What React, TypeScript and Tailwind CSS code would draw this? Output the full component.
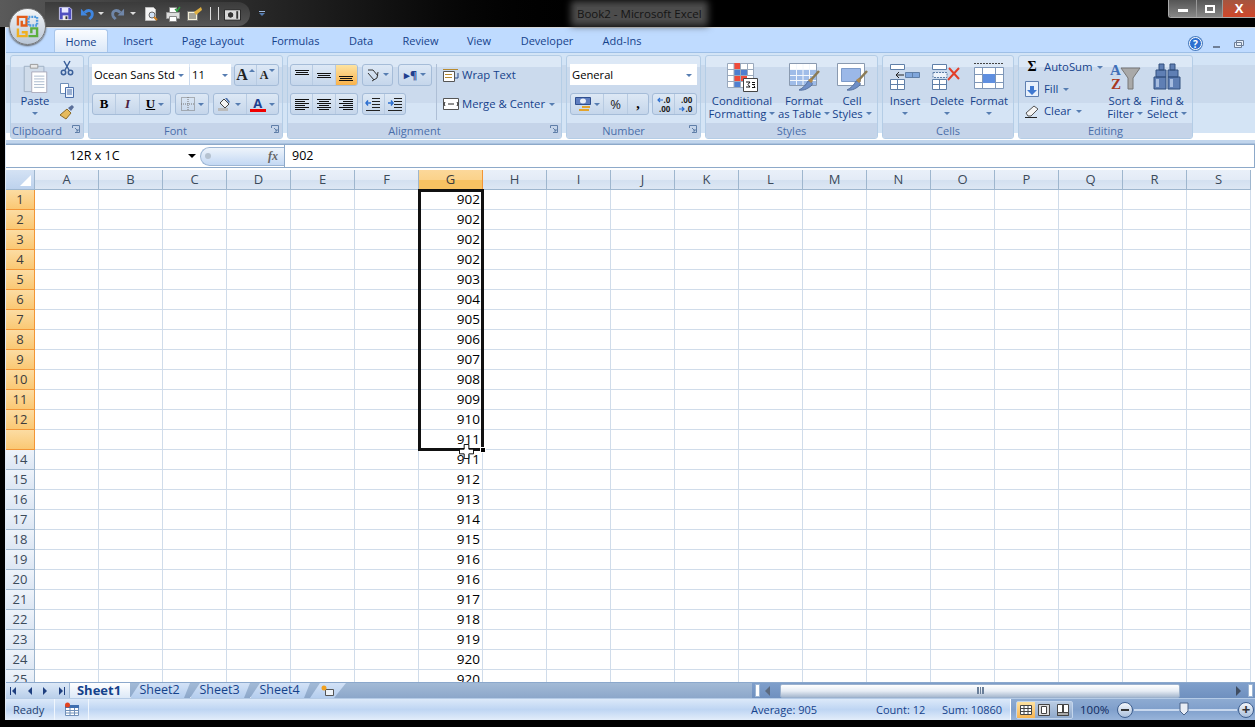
import type { ReactNode } from "react";

const font = "font-['Open_Sans',sans-serif]";
const columns = ["A", "B", "C", "D", "E", "F", "G", "H", "I", "J", "K", "L", "M", "N", "O", "P", "Q", "R", "S"];
const values = [902, 902, 902, 902, 903, 904, 905, 906, 907, 908, 909, 910, 911, 911, 912, 913, 914, 915, 916, 916, 917, 918, 919, 920, 920];
const tabs = [
  ["Home", "w-[54px]"],
  ["Insert", "w-[60px]"],
  ["Page Layout", "w-[90px]"],
  ["Formulas", "w-[75px]"],
  ["Data", "w-[56px]"],
  ["Review", "w-[63px]"],
  ["View", "w-[54px]"],
  ["Developer", "w-[82px]"],
  ["Add-Ins", "w-[68px]"],
];

function Caret({ className = "" }: { className?: string }) {
  return <span className={`inline-block h-0 w-0 shrink-0 border-x-[3px] border-t-[3px] border-x-transparent border-t-[#567db1] ${className}`} />;
}

function Group({ label, width, launcher, children }: { label: string; width: string; launcher?: boolean; children: ReactNode }) {
  return (
    <section className={`${width} flex h-[84px] shrink-0 flex-col overflow-hidden rounded-[3px] border border-[#b4cde6] bg-[linear-gradient(#dce8f6_0,#dce8f6_11px,#cbdaed_11px,#cbdaed_47px,#d5e4f5_47px,#d5e4f5_100%)]`}>
      <div className="min-h-0 flex-1">{children}</div>
      <div className={`relative flex h-[15px] items-center justify-center bg-[#c5d4e9] text-[11px] leading-none text-[#4a6ea9] ${launcher ? "pr-[20px]" : ""}`}>
        {label}
        {launcher && (
          <svg viewBox="0 0 8 8" className="absolute right-[3px] top-[2px] h-2 w-2" fill="none" stroke="#5f7ea8">
            <path d="M.5 3V.5h7v7H3M3 3l3 3M6 4v2H4" />
          </svg>
        )}
      </div>
    </section>
  );
}

function BtnGroup({ width, children }: { width: string; children: ReactNode }) {
  return <div className={`${width} flex h-[22px] items-center overflow-hidden rounded-[3px] border border-[#a5bcd8] bg-gradient-to-b from-[#dde8f5] to-[#c5d6eb]`}>{children}</div>;
}

function Cell({ children, className = "flex-1" }: { children: ReactNode; className?: string }) {
  return <div className={`${className} flex h-full items-center justify-center gap-[3px] border-r border-[#b8cbe2] last:border-r-0`}>{children}</div>;
}

function Lines({ kind }: { kind: "left" | "center" | "right" | "top" | "middle" | "bottom" }) {
  const rows = kind === "top" || kind === "middle" || kind === "bottom";
  const y = kind === "top" ? [3, 5, 7] : kind === "middle" ? [6, 8, 10] : kind === "bottom" ? [9, 11, 13] : [3, 5, 7, 9, 11, 13];
  return (
    <svg viewBox="0 0 16 16" className="h-4 w-4" stroke="#111" fill="none">
      {y.map((v, i) => {
        const narrow = !rows && i % 2 === 1;
        const x1 = kind === "right" && narrow ? 5 : kind === "center" && narrow ? 3 : rows && i === 1 ? 2 : 1;
        const x2 = kind === "left" && narrow ? 11 : kind === "center" && narrow ? 13 : rows && i === 1 ? 14 : 15;
        return <path key={v} d={`M${x1} ${v + 0.5}H${x2}`} />;
      })}
    </svg>
  );
}

function Big({ label, second, width, caretOnly, children }: { label: string; second?: string; width: string; caretOnly?: boolean; children: ReactNode }) {
  return (
    <div className={`${width} flex shrink-0 flex-col items-center text-[11.3px] leading-[13px] text-[#15428b]`}>
      <div className="flex h-[35px] items-center justify-center">{children}</div>
      <div className="whitespace-nowrap">{label}</div>
      {caretOnly ? (
        <Caret className="mt-[5px]" />
      ) : (
        <div className="flex items-center gap-[3px] whitespace-nowrap">
          {second}
          <Caret />
        </div>
      )}
    </div>
  );
}

function Brush() {
  return (
    <>
      <path stroke="#8a7a55" strokeWidth="2.5" d="M31 9 21 20" />
      <path fill="#6f8ec6" stroke="#56719f" d="M20 19c3 0 5 2 4 4-3 3-8 6-13 5 4-2 7-5 9-9z" />
      <path fill="#b08a50" d="m20 18 3-2 2 3-2 2z" />
    </>
  );
}

function CondIcon() {
  return (
    <svg viewBox="0 0 32 30" className="h-[30px] w-[32px]">
      <path fill="#fff" stroke="#9aa9bd" d="M1.5 1.5h26v24h-26z" />
      <path fill="#ef4b3a" d="M8 1h6v6H8zM8 13h13v6H8z" />
      <path fill="#4f7fd0" d="M8 7h14v6H8zM8 19h6v6H8z" />
      <path stroke="#9aa9bd" fill="none" d="M1.5 7.5h26M1.5 13.5h26M1.5 19.5h26M8 1.5v24M14.5 1.5v24M21.5 1.5v12" />
      <path fill="#fff" stroke="#444" d="M17.5 16.5h14v13h-14z" />
      <path stroke="#111" fill="none" d="M20 20h4l-2 2.5 2 2.5h-4M26 20.5h3M26 22.5h3M26 25.5h3l-1-2" />
    </svg>
  );
}

function BrushTable({ cell }: { cell?: boolean }) {
  return (
    <svg viewBox="0 0 32 30" className="h-[30px] w-[32px]">
      <path fill="#fff" stroke="#8a9ab0" d="M1.5 1.5h27v22h-27z" />
      {cell ? <path fill="#9bb8e8" stroke="#7d9ac8" d="M5.5 6.5h19v13h-19z" /> : <path fill="#9fbce8" d="M2 7h26v16H2z" />}
      {!cell && <path stroke="#f3f7fc" fill="none" d="M2 7.5h26M2 13.5h26M2 18.5h26M8.5 2v21M15 2v21M21.5 2v21" />}
      <Brush />
    </svg>
  );
}

function CellIcon({ kind }: { kind: "insert" | "delete" }) {
  return (
    <svg viewBox="0 0 32 30" className="h-[30px] w-[32px]">
      <g fill="#fff" stroke="#5f7fa8">
        <path d="M1.5 2.5h14v5h-14zM1.5 17.5h14v10h-14zM8.5 17.5v10M1.5 22.5h14" />
      </g>
      {kind === "insert" ? (
        <>
          <path fill="#7fa6dc" stroke="#5f7fa8" d="M16.5 10.5h14v5h-14zM23.5 10.5v5" />
          <path stroke="#222" fill="none" d="M15 13H7M10 10l-3 3 3 3" />
        </>
      ) : (
        <>
          <path fill="#eef3fa" stroke="#5f7fa8" strokeDasharray="2 1" d="M2 10.5h14v5H2z" />
          <path stroke="#e2402a" strokeWidth="2" fill="none" d="M18 6l10 11M28 6 17 18" />
        </>
      )}
    </svg>
  );
}

function SmallTableIcon() {
  return (
    <svg viewBox="0 0 16 16" className="h-4 w-4" fill="none">
      <path fill="#fff" stroke="#6f8fb8" d="M1.5 3.5h13v10h-13z" />
      <path fill="#3f6fb0" d="M1 3h14v3H1z" />
      <path stroke="#6f8fb8" d="M1.5 8.5h13M1.5 11h13M6 6v8M10.5 6v8" />
      <circle cx="3.5" cy="3" r="2.5" fill="#e4431f" />
    </svg>
  );
}

function NavArrow({ dir, bar }: { dir: "left" | "right"; bar?: boolean }) {
  return (
    <svg viewBox="0 0 8 8" className="h-2 w-2" fill="#1f3f7f">
      {dir === "left" ? <path d="M6 0v8L2 4z" /> : <path d="M2 0v8l4-4z" />}
      {bar && <path d={dir === "left" ? "M0 0h1v8H0z" : "M7 0h1v8H7z"} />}
    </svg>
  );
}

export default function App() {
  return (
    <div className={`${font} relative flex h-[727px] w-[1255px] flex-col overflow-hidden bg-black`}>
      {/* title bar */}
      <header className="relative flex h-[27px] shrink-0 items-center bg-gradient-to-r from-[#5a5a5a] via-black to-black">
        <div className="ml-[45px] flex h-[24px] w-[205px] items-center rounded-r-full bg-gradient-to-b from-[#3b3b3b] to-[#565656] pl-[13px]">
          <svg viewBox="0 0 16 16" className="h-[15px] w-[15px] shrink-0">
            <path fill="#4f4fc0" stroke="#c8c8f0" d="M1.5 1.5h11l2 2v11h-13z" />
            <path fill="#e8e8ff" d="M4 2h7v5H4z" />
            <path fill="#eee" d="M5 10h6v5H5z" />
            <path fill="#333" d="M8 11h2v3H8z" />
          </svg>
          <svg viewBox="0 0 16 16" className="ml-[7px] h-[15px] w-[15px] shrink-0" fill="none">
            <path stroke="#3f86e0" strokeWidth="3" d="M5 7c4-4 9-2 8 3-.5 2-2 3-3 4" />
            <path fill="#3f86e0" d="M1 3v7h7z" />
          </svg>
          <Caret className="ml-[3px] border-t-[#ddd]" />
          <svg viewBox="0 0 16 16" className="ml-[6px] h-[15px] w-[15px] shrink-0" fill="none">
            <path stroke="#6f86a8" strokeWidth="3" d="M11 7C7 3 2 5 3 10c.5 2 2 3 3 4" />
            <path fill="#6f86a8" d="M15 3v7H8z" />
          </svg>
          <Caret className="ml-[5px] border-t-[#ddd]" />
          <svg viewBox="0 0 16 16" className="ml-[7px] h-[16px] w-[16px] shrink-0">
            <path fill="#f5f5f5" stroke="#bbb" d="M2.5 1.5h8l2 2v11h-10z" />
            <circle cx="9" cy="9" r="3" fill="#cfe0f5" stroke="#666" />
            <path stroke="#d08020" strokeWidth="2" d="m11 11 3 3" />
          </svg>
          <svg viewBox="0 0 16 16" className="ml-[6px] h-[16px] w-[16px] shrink-0">
            <path fill="#ddd" stroke="#999" d="M1.5 6.5h13v6h-13z" />
            <path fill="#fff" stroke="#888" d="M4.5 1.5h7v5h-7zM4.5 10.5h7v5h-7z" />
            <path stroke="#2f9e3f" strokeWidth="1.5" fill="none" d="m10 3 2 2 3-4" />
          </svg>
          <svg viewBox="0 0 16 16" className="ml-[5px] h-[16px] w-[16px] shrink-0">
            <path fill="#f4f0d8" stroke="#777" d="M1.5 5.5h10v9h-10z" />
            <path stroke="#555" d="M3 8h7M3 10h7M3 12h7" />
            <path fill="#e0b040" d="m8 6 7-5 1 3-6 5z" />
          </svg>
          <span className="ml-[8px] h-[13px] w-px shrink-0 bg-[#ddd]" />
          <span className="ml-[7px] h-[13px] w-px shrink-0 bg-[#ddd]" />
          <svg viewBox="0 0 18 14" className="ml-[5px] h-[14px] w-[17px] shrink-0">
            <path fill="#d8d8d8" stroke="#222" d="M.5 2.5h17v11H.5z" />
            <circle cx="7" cy="8" r="3.5" fill="#333" stroke="#eee" />
            <path fill="#333" d="M13 4h2v8h-2z" />
          </svg>
        </div>
        <div className="ml-[9px] flex flex-col items-center gap-[1px]">
          <span className="h-px w-[6px] bg-[#9db9e0]" />
          <Caret className="border-t-[#9db9e0]" />
        </div>
        <div className="absolute left-[577px] top-[7px] bg-[#4c4c4c] text-[11.5px] leading-[13px] whitespace-nowrap text-[#151515] shadow-[0_0_7px_6px_#4c4c4c]">Book2 - Microsoft Excel</div>
        <div className="absolute right-0 top-0 flex h-[18px] w-[87px] overflow-hidden rounded-bl-[3px] border-b border-l border-[#aaa]">
          <div className="flex w-[28px] items-center justify-center border-r border-[#999] bg-gradient-to-b from-[#555] to-[#888]">
            <span className="mt-[3px] h-[3px] w-[10px] bg-white" />
          </div>
          <div className="flex w-[26px] items-center justify-center border-r border-[#999] bg-gradient-to-b from-[#555] to-[#888]">
            <span className="h-[8px] w-[10px] border-2 border-white" />
          </div>
          <div className="flex flex-1 items-center justify-center bg-gradient-to-b from-[#a4553f] to-[#d0462a] text-[13px] leading-none font-bold text-white">X</div>
        </div>
      </header>

      {/* office orb over the window corner */}
      <div className="absolute left-[9px] top-[8px] z-20 flex h-[37px] w-[37px] items-center justify-center rounded-full border border-[#777] bg-gradient-to-b from-[#f4f6f8] to-[#b9c6d6] shadow-[0_1px_2px_#555]">
        <svg viewBox="0 0 24 24" className="h-[23px] w-[23px]" fill="none" strokeWidth="2.5">
          <path stroke="#e25c1a" d="M2 11V2h9v9H6V6" />
          <path stroke="#4f9be0" strokeDasharray="2 1" d="M13 2h9v9h-9z" />
          <path stroke="#f0b020" d="M2 14v8h9v-4H6" />
          <path stroke="#5cae3c" d="M13 22h9v-8h-6v5" />
        </svg>
      </div>

      <main className="ml-[5px] flex h-[693px] w-[1250px] flex-col border-t border-l border-t-[#d8d8d8] border-l-[#dfe8f4] bg-[#bfdbff]">
        {/* ribbon tabs */}
        <nav className="relative flex h-[24px] shrink-0 items-end pl-[48px] pr-[2px]">
          {tabs.map(([name, w], i) => (
            <div key={name} className={`${w} flex h-[23px] items-center justify-center text-[11px] leading-none text-[#15428b] ${i === 0 ? "rounded-t-[3px] border border-b-0 border-[#a9c6ea] bg-gradient-to-b from-[#fafcff] to-[#dbe8f8]" : ""}`}>
              {name}
            </div>
          ))}
          <div className="ml-auto flex items-center pb-[2px]">
            <span className="flex h-[13px] w-[13px] items-center justify-center rounded-full border border-white bg-[#2d6fd0] text-[10px] leading-none font-bold text-white shadow-[0_0_0_1px_#4d7fc0]">?</span>
            <span className="ml-[11px] mt-[6px] h-[2px] w-[7px] bg-[#6f7f96]" />
            <svg viewBox="0 0 10 8" className="ml-[14px] mr-[9px] h-2 w-[10px]" fill="#e8f0fa" stroke="#6f7f96">
              <path d="M2.5.5h7v5h-7zM.5 2.5h7v5h-7z" />
            </svg>
          </div>
        </nav>

        {/* ribbon */}
        <div className="flex h-[88px] shrink-0 gap-[4px] border-t border-[#9ebfe6] bg-[linear-gradient(#d3e4f6_0,#d3e4f6_12px,#c9d9ec_12px,#c9d9ec_50px,#d4e4f5_50px,#d4e4f5_80px,#ffffff_80px,#ffffff_100%)] pl-[4px] pt-[2px]">
          <Group label="Clipboard" width="w-[74px]" launcher>
            <div className="flex pt-[3px]">
              <Big label="Paste" width="w-[48px]" caretOnly>
                <svg viewBox="0 0 26 32" className="mt-[2px] h-[30px] w-[26px]">
                  <path fill="#d0dcea" stroke="#9fb0c4" d="M1.5 3.5h21v27h-21z" />
                  <path fill="#e8e8e8" stroke="#999" d="M8 1.5h8v4H8z" />
                  <path fill="#fff" stroke="#aab" d="M9.5 9.5h16v22h-16z" />
                  <path stroke="#a8b8cc" d="M12 14h11M12 17h11M12 20h11M12 23h11M12 26h11" />
                </svg>
              </Big>
              <div className="flex flex-col items-center gap-[6px] pt-[1px]">
                <svg viewBox="0 0 16 16" className="h-4 w-4" fill="none" stroke="#3a5f9a" strokeWidth="1.5">
                  <path d="m5 1 5 9M11 1 6 10" />
                  <circle cx="4.5" cy="12.5" r="2.2" />
                  <circle cx="11.5" cy="12.5" r="2.2" />
                </svg>
                <svg viewBox="0 0 16 16" className="h-4 w-4">
                  <path fill="#fff" stroke="#6f8fb8" d="M1.5 1.5h8v10h-8z" />
                  <path fill="#eaf2fc" stroke="#4a6ea9" d="M6.5 5.5h8v10h-8z" />
                  <path stroke="#4a6ea9" d="M8 8h5M8 10h5M8 12h5" />
                </svg>
                <svg viewBox="0 0 16 16" className="h-4 w-4">
                  <path fill="#e6bb5d" stroke="#8a6a28" d="M1 11 8 5l4 4-5 6z" />
                  <path fill="#5a6f9a" d="m9 4 4-3 2 2-3 4z" />
                </svg>
              </div>
            </div>
          </Group>

          <Group label="Font" width="w-[195px]" launcher>
            <div className="flex flex-col gap-[8px] pl-[3px] pt-[8px]">
              <div className="flex h-[21px] items-center">
                <div className="flex h-[21px] w-[97px] items-center justify-between bg-white pl-[2px] pr-[5px] pt-[1px] text-[11.2px] whitespace-nowrap text-black">
                  Ocean Sans Std <Caret />
                </div>
                <div className="ml-px flex h-[21px] w-[41px] items-center justify-between bg-white pl-[2px] pr-[3px] pt-[1px] text-[11.2px] text-black">
                  11 <Caret />
                </div>
                <div className="ml-[3px]">
                  <BtnGroup width="w-[45px]">
                    <Cell>
                      <span className="font-['Liberation_Serif',serif] text-[16px] leading-none font-bold text-[#222]">A</span>
                      <Caret className="mb-[8px] -ml-[2px] rotate-180" />
                    </Cell>
                    <Cell>
                      <span className="font-['Liberation_Serif',serif] text-[12px] leading-none font-bold text-[#222]">A</span>
                      <Caret className="mb-[8px] -ml-[2px]" />
                    </Cell>
                  </BtnGroup>
                </div>
              </div>
              <div className="flex items-center">
                <BtnGroup width="w-[79px]">
                  <Cell className="w-[23px]"><span className="font-['Liberation_Serif',serif] text-[13px] font-bold text-black">B</span></Cell>
                  <Cell className="w-[24px]"><span className="font-['Liberation_Serif',serif] text-[13px] font-bold text-[#4a2040] italic">I</span></Cell>
                  <Cell className="flex-1"><span className="font-['Liberation_Serif',serif] text-[13px] font-bold text-black underline">U</span><Caret /></Cell>
                </BtnGroup>
                <div className="ml-[4px]">
                  <BtnGroup width="w-[34px]">
                    <Cell>
                      <svg viewBox="0 0 14 14" className="h-[14px] w-[14px]" fill="none" stroke="#777" strokeDasharray="1 1"><path d="M.5.5h13v13H.5zM7 0v14M0 7h14" /></svg>
                      <Caret />
                    </Cell>
                  </BtnGroup>
                </div>
                <div className="ml-[4px]">
                  <BtnGroup width="w-[66px]">
                    <Cell>
                      <svg viewBox="0 0 14 14" className="h-[14px] w-[14px]"><path fill="#f4f4f4" stroke="#444" d="m2 6 4-4 5 5-4 4z" /><path fill="#4a6ea9" d="M7 1h2l3 4-1 1z" /><path fill="#bbb" d="M0 11h10v3H0z" /></svg>
                      <Caret />
                    </Cell>
                    <Cell>
                      <span className="flex w-[16px] flex-col items-center text-[13px] leading-[12px] font-bold text-[#1f3f8f]">A<span className="h-[3px] w-full bg-[#f00000]" /></span>
                      <Caret />
                    </Cell>
                  </BtnGroup>
                </div>
              </div>
            </div>
          </Group>

          <Group label="Alignment" width="w-[275px]" launcher>
            <div className="flex pl-[2px] pt-[8px]">
              <div className="flex w-[146px] flex-col gap-[8px]">
                <div className="flex h-[21px] items-center gap-[4px]">
                  <BtnGroup width="w-[68px]">
                    <Cell><Lines kind="top" /></Cell>
                    <Cell><Lines kind="middle" /></Cell>
                    <Cell className="flex-1 bg-gradient-to-b from-[#fde3a0] to-[#f9b24a]"><Lines kind="bottom" /></Cell>
                  </BtnGroup>
                  <BtnGroup width="w-[31px]">
                    <Cell>
                      <svg viewBox="0 0 14 14" className="h-[14px] w-[14px]" fill="none" stroke="#333"><path d="M2 2h5l5 6M2 5l6 7M12 4l-1 6-5 3" /></svg>
                      <Caret />
                    </Cell>
                  </BtnGroup>
                  <div className="ml-[1px]"><BtnGroup width="w-[34px]"><Cell><span className="text-[11px] leading-none font-bold text-[#1f3f8f]">▸¶</span><Caret /></Cell></BtnGroup></div>
                </div>
                <div className="flex items-center gap-[4px]">
                  <BtnGroup width="w-[68px]">
                    <Cell><Lines kind="left" /></Cell>
                    <Cell><Lines kind="center" /></Cell>
                    <Cell><Lines kind="right" /></Cell>
                  </BtnGroup>
                  <BtnGroup width="w-[44px]">
                    <Cell>
                      <svg viewBox="0 0 16 16" className="h-4 w-4" fill="none" stroke="#222"><path d="M7 2.5h8M7 5.5h8M7 8.5h8M7 11.5h8M1 14.5h14" /><path stroke="#2d6fd0" strokeWidth="1.5" d="M6 7H1M3 4.5 1 7l2 2.5" /></svg>
                    </Cell>
                    <Cell>
                      <svg viewBox="0 0 16 16" className="h-4 w-4" fill="none" stroke="#222"><path d="M7 2.5h8M7 5.5h8M7 8.5h8M7 11.5h8M1 14.5h14" /><path stroke="#2d6fd0" strokeWidth="1.5" d="M1 7h5M4 4.5 6 7 4 9.5" /></svg>
                    </Cell>
                  </BtnGroup>
                </div>
              </div>
              <span className="h-[56px] w-px bg-[#aebfd6]" />
              <div className="ml-[6px] flex flex-col gap-[15px] pt-[4px] text-[11.3px] leading-[14px] text-[#15428b]">
                <div className="flex h-[14px] items-center gap-[3px]">
                  <svg viewBox="0 0 16 16" className="h-4 w-4" fill="none" stroke="#555"><path fill="#fff" d="M.5 4.5h11v10H.5z" /><path stroke="#b88a30" d="M0 2.5h15M2 7.5h7M2 10.5h7" /><path stroke="#2d4f8f" d="M15 6v5h-3" /></svg>
                  Wrap Text
                </div>
                <div className="flex h-[14px] items-center gap-[3px] whitespace-nowrap">
                  <svg viewBox="0 0 16 16" className="h-4 w-4" fill="none" stroke="#555"><path fill="#fff" d="M.5 2.5h15v11H.5z" /><path stroke="#222" d="M5 8h6M2 6l-1 2 1 2M14 6l1 2-1 2" /></svg>
                  Merge &amp; Center
                  <Caret className="ml-[1px]" />
                </div>
              </div>
            </div>
          </Group>

          <Group label="Number" width="w-[135px]" launcher>
            <div className="flex flex-col gap-[8px] pl-[3px] pt-[8px]">
              <div className="flex h-[21px] w-[127px] items-center justify-between bg-white pl-[2px] pr-[5px] pt-[1px] text-[11.2px] text-black">
                General <Caret />
              </div>
              <div className="flex gap-[3px]">
                <BtnGroup width="w-[79px]">
                  <Cell className="w-[33px]">
                    <svg viewBox="0 0 16 16" className="h-4 w-4"><path fill="#5f7ec0" stroke="#2f4f8f" d="M.5 1.5h15v7H.5z" /><ellipse cx="8" cy="5" rx="3" ry="2.5" fill="#e8eef8" /><path fill="#e3a42c" d="M7 10h8v2H7zM4 13h10v2H4z" /></svg>
                    <Caret />
                  </Cell>
                  <Cell className="w-[24px]"><span className="text-[13px] leading-none text-[#222]">%</span></Cell>
                  <Cell className="flex-1"><span className="font-['Liberation_Serif',serif] text-[14px] leading-[8px] font-bold text-black">,</span></Cell>
                </BtnGroup>
                <BtnGroup width="w-[45px]">
                  <Cell>
                    <span className="flex flex-col items-end text-[8px] leading-[9px] font-bold text-[#222]">
                      <span className="flex items-center gap-[1px]"><svg viewBox="0 0 6 6" className="h-[6px] w-[6px]" fill="none" stroke="#2d6fd0" strokeWidth="1.2"><path d="M6 3H1M3 1 1 3l2 2" /></svg>.0</span>
                      <span>.00</span>
                    </span>
                  </Cell>
                  <Cell>
                    <span className="flex flex-col items-end text-[8px] leading-[9px] font-bold text-[#222]">
                      <span>.00</span>
                      <span className="flex items-center gap-[1px]"><svg viewBox="0 0 6 6" className="h-[6px] w-[6px]" fill="none" stroke="#2d6fd0" strokeWidth="1.2"><path d="M0 3h5M3 1l2 2-2 2" /></svg>.0</span>
                    </span>
                  </Cell>
                </BtnGroup>
              </div>
            </div>
          </Group>

          <Group label="Styles" width="w-[173px]">
            <div className="flex items-start pt-[3px]">
              <Big label="Conditional" second="Formatting" width="w-[72px]"><CondIcon /></Big>
              <Big label="Format" second="as Table" width="w-[52px]"><BrushTable /></Big>
              <Big label="Cell" second="Styles" width="w-[44px]"><BrushTable cell /></Big>
            </div>
          </Group>

          <Group label="Cells" width="w-[132px]">
            <div className="flex pt-[3px]">
              <Big label="Insert" width="w-[44px]" caretOnly><CellIcon kind="insert" /></Big>
              <Big label="Delete" width="w-[40px]" caretOnly><CellIcon kind="delete" /></Big>
              <Big label="Format" width="w-[44px]" caretOnly>
                <svg viewBox="0 0 32 30" className="h-[30px] w-[32px]">
                  <path stroke="#444" strokeDasharray="2 1" d="M1 1.5h30" />
                  <path fill="#fff" stroke="#7f97b8" d="M1.5 5.5h29v21h-29zM9.5 5.5v21M22.5 5.5v21M1.5 12.5h29M1.5 20.5h29" />
                  <path fill="#5f8fe0" d="M10 12h12v9H10z" />
                </svg>
              </Big>
            </div>
          </Group>

          <Group label="Editing" width="w-[175px]">
            <div className="flex pt-[3px]">
              <div className="flex w-[85px] flex-col gap-[6px] pl-[6px] text-[11.3px] leading-[16px] text-[#15428b]">
                <div className="flex h-[16px] items-center gap-[5px] whitespace-nowrap"><span className="w-[14px] text-center font-['Liberation_Serif',serif] text-[14px] font-bold text-black">Σ</span>AutoSum<Caret /></div>
                <div className="flex h-[16px] items-center gap-[5px]">
                  <svg viewBox="0 0 14 16" className="h-[16px] w-[14px]"><path fill="#e8f0fb" stroke="#5f7fb0" d="M.5.5h13v15H.5z" /><path fill="#3f78d0" d="M5 5h4v4h3l-5 5-5-5h3z" /></svg>
                  Fill<Caret />
                </div>
                <div className="flex h-[16px] items-center gap-[5px]">
                  <svg viewBox="0 0 14 14" className="h-[14px] w-[14px]"><path fill="#f4f4f4" stroke="#555" d="M1 9 9 2l4 3-7 7H3z" /><path stroke="#222" d="M0 13.5h12" /></svg>
                  Clear<Caret />
                </div>
              </div>
              <Big label="Sort &" second="Filter" width="w-[42px]">
                <svg viewBox="0 0 32 30" className="h-[30px] w-[32px]">
                  <text x="1" y="13" fontFamily="Liberation Serif" fontSize="15" fontWeight="700" fill="#3f6fb8">A</text>
                  <text x="2" y="27" fontFamily="Liberation Serif" fontSize="15" fontWeight="700" fill="#a83820">Z</text>
                  <path fill="#a9a9a9" stroke="#777" d="M12 6h19l-7 10v11h-5V16z" />
                </svg>
              </Big>
              <Big label="Find &" second="Select" width="w-[42px]">
                <svg viewBox="0 0 30 28" className="h-[28px] w-[30px]">
                  <g fill="#5f7fb4" stroke="#33507f">
                    <path d="M7 1h5v6H7zM18 1h5v6h-5zM4 7h10v7H4zM16 7h10v7H16zM2 14h12v12H2zM16 14h12v12H16z" />
                  </g>
                  <path fill="#a7bde0" d="M4 16h3v8H4zM18 16h3v8h-3z" />
                </svg>
              </Big>
            </div>
          </Group>
        </div>

        {/* formula bar */}
        <div className="h-[4px] shrink-0 border-b border-[#a9c1de] bg-[#c1d5ec]" />
        <div className="flex h-[24px] shrink-0 border-y border-r border-[#8da9c9] bg-white text-[12.5px] text-black">
          <div className="relative flex w-[194px] items-center justify-center pr-[17px]">
            12R x 1C
            <Caret className="absolute right-[4px] top-[9px] border-x-[4px] border-t-[4px] border-t-black" />
          </div>
          <div className="flex w-[85px] items-center border-r border-[#8da9c9]">
            <div className="flex h-[19px] w-full items-center justify-between rounded-l-full border border-r-0 border-[#9db6d4] bg-gradient-to-b from-[#eef4fb] to-[#c3d8f3] pl-[4px] pr-[6px]">
              <span className="h-[6px] w-[6px] rounded-full bg-[#b5c2d0]" />
              <span className="font-['Liberation_Serif',serif] text-[12px] leading-none font-bold text-[#666] italic">fx</span>
            </div>
          </div>
          <div className="flex flex-1 items-center pl-[7px]">902</div>
        </div>
        <div className="h-[2px] shrink-0 bg-white" />

        {/* sheet */}
        <div className="relative h-[512px] shrink-0 overflow-hidden bg-white">
          <div className="grid grid-cols-[29px_repeat(19,64px)] auto-rows-[20px]">
            <div className="flex items-end justify-end border-r border-b border-[#9eb6ce] bg-gradient-to-b from-[#d4e2f4] to-[#bdd2ed] pb-[3px] pr-[3px]">
              <span className="h-0 w-0 border-b-[11px] border-l-[11px] border-b-white border-l-transparent" />
            </div>
            {columns.map((c) => (
              <div key={c} className={`flex items-center justify-center border-r border-b text-[13px] leading-none ${c === "G" ? "border-[#f29536] bg-[linear-gradient(#fcd89a_0,#fbd28a_10px,#f8c262_10px,#f8c262_100%)] text-[#3c3c3c]" : "border-[#9eb6ce] bg-[linear-gradient(#e9f0f9_0,#e3ebf6_10px,#d3e0f0_10px,#dde7f4_100%)] text-[#3b4a5a]"}`}>
                {c}
              </div>
            ))}
            {values.map((v, i) => {
              const selected = i < 13;
              return (
                <div key={i} className="contents">
                  <div className={`flex items-center justify-center border-r border-b text-[13px] leading-none ${selected ? "border-[#f29536] bg-gradient-to-b from-[#fcdca2] to-[#fac873] text-[#3c3c3c]" : "border-[#9eb6ce] bg-gradient-to-b from-[#eef3fa] to-[#dde7f4] text-[#3b4a5a]"}`}>
                    {i === 12 ? "" : i + 1}
                  </div>
                  {columns.map((c) => (
                    <div key={c} className="flex items-center justify-end border-r border-b border-[#d0dcea] pr-[2px] pt-[1px] text-[13.5px] leading-none text-black">
                      {c === "G" ? v : ""}
                    </div>
                  ))}
                </div>
              );
            })}
          </div>
          {/* selection outline and drag cursor */}
          <div className="pointer-events-none absolute left-[412px] top-[19px] h-[262px] w-[66px] border-[3px] border-[#111]" />
          <div className="absolute left-[474px] top-[277px] h-[6px] w-[6px] border border-white bg-black" />
          <svg viewBox="0 0 16 16" className="absolute left-[453px] top-[274px] h-[15px] w-[15px]">
            <path fill="#fff" stroke="#000" d="M5.5.5h5v5h5v5h-5v5h-5v-5h-5v-5h5z" />
          </svg>
        </div>

        {/* sheet tabs and scrollbar */}
        <div className="flex h-[16px] shrink-0 items-stretch border-t border-[#8ba8cc] bg-gradient-to-b from-[#a3bad6] to-[#8aa5c8]">
          <div className="flex w-[64px] items-center justify-around border-r border-[#9db6d4] bg-gradient-to-b from-[#dce8f7] to-[#b9cfea]">
            <NavArrow dir="left" bar />
            <NavArrow dir="left" />
            <NavArrow dir="right" />
            <NavArrow dir="right" bar />
          </div>
          <div className="flex h-full w-[682px] items-center bg-gradient-to-b from-[#a3bad6] to-[#8ca7ca]">
            <div className="flex h-[15px] w-[60px] items-center justify-center bg-gradient-to-b from-[#ffffff] to-[#dce8f7] pr-[2px] text-[13px] font-bold text-[#15428b]">Sheet1</div>
            {["Sheet2", "Sheet3", "Sheet4"].map((s) => (
              <div key={s} className="flex h-[15px] w-[60px] items-center justify-center border-l border-white bg-gradient-to-b from-[#d3e2f6] to-[#b4cdee] pr-[2px] text-[12.5px] text-[#15428b] [clip-path:polygon(10px_0,100%_0,calc(100%-6px)_100%,0_100%)]">
                {s}
              </div>
            ))}
            <div className="flex h-[15px] w-[36px] items-center justify-center bg-gradient-to-b from-[#d3e2f6] to-[#b4cdee] [clip-path:polygon(10px_0,100%_0,calc(100%-12px)_100%,0_100%)]">
              <svg viewBox="0 0 14 12" className="h-3 w-[14px]"><path fill="#eef3f8" stroke="#555" d="M4.5 4.5h8v6h-8z" /><circle cx="3" cy="3" r="2.5" fill="#f0a020" /></svg>
            </div>
          </div>
          <div className="flex flex-1 items-center bg-gradient-to-b from-[#7f9fcb] to-[#6f90bf] pr-[2px]">
            <span className="ml-[3px] h-[13px] w-[5px] border border-[#9db6d4] bg-white" />
            <span className="ml-[5px] h-0 w-0 border-y-[5px] border-r-[5px] border-y-transparent border-r-[#5c6a7f]" />
            <div className="ml-[10px] flex h-[14px] w-[400px] items-center justify-center rounded-[2px] border border-[#9bb1cd] bg-gradient-to-b from-white via-[#e6ecf4] to-[#a8b9cf]">
              <span className="h-[7px] w-[7px] border-x border-[#6b7f99] bg-[repeating-linear-gradient(90deg,#6b7f99_0,#6b7f99_1px,transparent_1px,transparent_2px)]" />
            </div>
            <span className="ml-auto mr-[7px] h-0 w-0 border-y-[5px] border-l-[5px] border-y-transparent border-l-[#3f4c60]" />
            <span className="h-[13px] w-[5px] border border-[#9db6d4] bg-white" />
          </div>
        </div>

        {/* status bar */}
        <footer className="flex h-[22px] shrink-0 items-center border-t border-[#b5cbe6] bg-gradient-to-b from-[#dce9f9] via-[#bed5f3] to-[#e3edfa] text-[11px] leading-none text-[#15428b]">
          <span className="w-[48px] pl-[7px] text-[#1f3f6f]">Ready</span>
          <span className="h-full w-px bg-[#f0f6fd]" />
          <span className="flex w-[33px] items-center justify-center"><SmallTableIcon /></span>
          <span className="h-full w-px bg-[#f0f6fd]" />
          <span className="ml-[662px] w-[125px]">Average: 905</span>
          <span className="w-[66px]">Count: 12</span>
          <span className="w-[68px] whitespace-nowrap">Sum: 10860</span>
          <div className="flex h-full flex-1 items-center border-l border-white bg-gradient-to-b from-[#8eabd2] via-[#7f9fcb] to-[#98b4da] pl-[5px]">
            <div className="flex h-[18px] w-[57px] overflow-hidden rounded-[2px] border border-[#c3d5ec] bg-gradient-to-b from-[#b9cbe2] to-[#8fa9cc]">
              <span className="flex w-[19px] items-center justify-center bg-gradient-to-b from-[#fde2a0] to-[#f7b44f]">
                <svg viewBox="0 0 12 10" className="h-[10px] w-3" fill="#fff" stroke="#444"><path d="M.5.5h11v9H.5zM4 .5v9M8 .5v9M.5 3.5h11M.5 6.5h11" /></svg>
              </span>
              <span className="flex w-[19px] items-center justify-center">
                <svg viewBox="0 0 12 12" className="h-3 w-3" fill="#ddd" stroke="#444"><path d="M.5.5h11v11H.5z" /><path fill="#fff" d="M3.5 2.5h5v7h-5z" /></svg>
              </span>
              <span className="flex w-[19px] items-center justify-center">
                <svg viewBox="0 0 12 12" className="h-3 w-3" fill="#fff" stroke="#444"><path d="M.5.5h11v11H.5z" /><path fill="#aaa" d="M.5 8.5h11v3H.5zM5.5.5h1v8h-1z" /></svg>
              </span>
            </div>
            <span className="ml-[7px] w-[33px] text-[11.5px] text-[#0f2a5f]">100%</span>
            <span className="ml-[4px] flex h-[16px] w-[16px] items-center justify-center rounded-full border border-[#3f5f8f] bg-gradient-to-b from-[#f4f7fb] to-[#a9bfdc]"><span className="h-[2px] w-2 bg-[#333]" /></span>
            <div className="relative mx-[1px] h-[2px] w-[103px] bg-[#c8d8ee]">
              <svg viewBox="0 0 10 14" className="absolute left-[45px] top-[-7px] h-[14px] w-[10px]"><path fill="#e8edf5" stroke="#4a6288" d="M1 1h8v8l-4 4-4-4z" /></svg>
            </div>
            <span className="flex h-[16px] w-[16px] items-center justify-center rounded-full border border-[#3f5f8f] bg-gradient-to-b from-[#f4f7fb] to-[#a9bfdc] text-[15px] leading-none font-bold text-[#333]">+</span>
          </div>
        </footer>
      </main>
    </div>
  );
}
